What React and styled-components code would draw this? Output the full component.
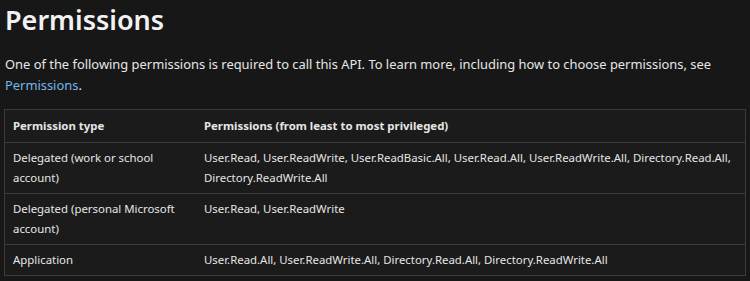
import React from "react"
import styled, { createGlobalStyle } from "styled-components"

const GlobalStyle = createGlobalStyle`
  html, body {
    margin: 0;
    padding: 0;
    background: #171717;
  }
  body {
    font-family: "Noto Sans", "Open Sans", sans-serif;
    color: #e6e6e6;
  }
`

const Page = styled.main`
  padding: 0 4px;
`

const Title = styled.h1`
  margin: 0;
  padding: 2px 0 0 1px;
  font-size: 27px;
  font-weight: 600;
  line-height: 36px;
  color: #f2f2f2;
`

const Intro = styled.p`
  margin: 16px 0 0 1px;
  font-size: 12.9px;
  line-height: 21px;
  color: #e6e6e6;
`

const Link = styled.a`
  color: #75b6e7;
  text-decoration: none;
`

const Table = styled.table`
  margin-top: 13px;
  width: 742px;
  border-collapse: collapse;
  border: 1px solid #3b3b3b;
  background: #1b1b1b;
  font-size: 11.4px;
  line-height: 20px;
`

const HeadCell = styled.th`
  text-align: left;
  font-weight: 700;
  padding: 6px 8px;
  border-bottom: 1px solid #3b3b3b;
  width: ${props => props.width || "auto"};
`

const Cell = styled.td`
  vertical-align: top;
  padding: 5px 8px;
  border-top: 1px solid #3b3b3b;
`

const rows = [
  {
    type: "Delegated (work or school account)",
    perms:
      "User.Read, User.ReadWrite, User.ReadBasic.All, User.Read.All, User.ReadWrite.All, Directory.Read.All, Directory.ReadWrite.All",
  },
  {
    type: "Delegated (personal Microsoft account)",
    perms: "User.Read, User.ReadWrite",
  },
  {
    type: "Application",
    perms: "User.Read.All, User.ReadWrite.All, Directory.Read.All, Directory.ReadWrite.All",
  },
]

const App = () => (
  <>
    <GlobalStyle />
    <Page>
      <Title>Permissions</Title>
      <Intro>
        One of the following permissions is required to call this API. To learn more, including how to choose
        permissions, see <Link href="#">Permissions</Link>.
      </Intro>
      <Table>
        <thead>
          <tr>
            <HeadCell width="175px">Permission type</HeadCell>
            <HeadCell>Permissions (from least to most privileged)</HeadCell>
          </tr>
        </thead>
        <tbody>
          {rows.map(row => (
            <tr key={row.type}>
              <Cell>{row.type}</Cell>
              <Cell>{row.perms}</Cell>
            </tr>
          ))}
        </tbody>
      </Table>
    </Page>
  </>
)

export default App
